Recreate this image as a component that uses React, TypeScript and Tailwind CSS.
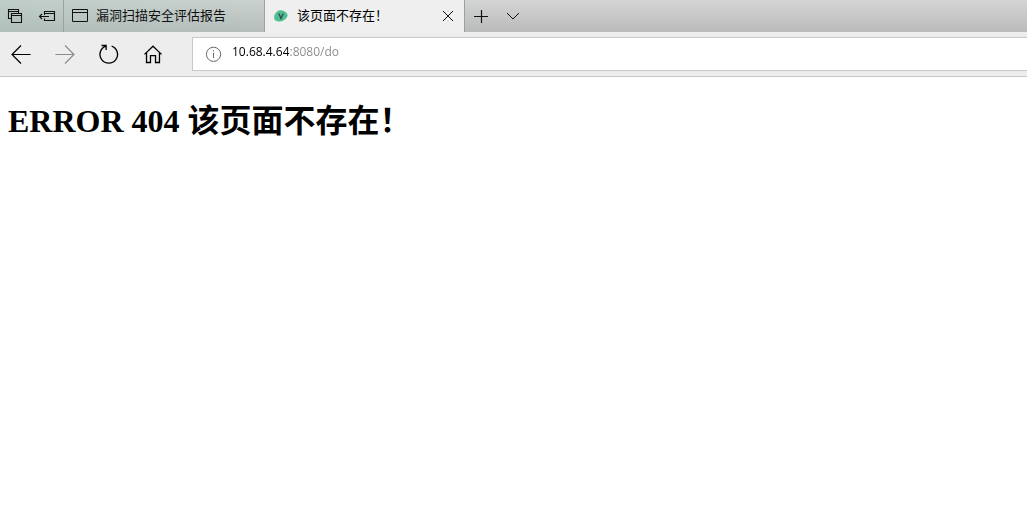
import { useState } from 'react'
import type { ReactNode } from 'react'

interface IconProps {
  className?: string
  children: ReactNode
}

function Icon({ className = 'size-5', children }: IconProps) {
  return (
    <svg viewBox="0 0 20 20" className={className} fill="none" stroke="currentColor" strokeWidth="1" aria-hidden="true">
      {children}
    </svg>
  )
}

function TabStrip() {
  return (
    <header className="flex h-8 bg-linear-to-b from-[#d5d5d5] to-[#bababa] text-[#111]">
      <div className="flex min-w-0 flex-1 bg-linear-to-r from-[#a5c5b9]/45 to-transparent to-50%">
        <div className="flex w-[63px] items-center gap-3 pl-[5px]">
          <button aria-label="Tabs you've set aside">
            <Icon>
              <path d="M6 12.5H3.5V3.5H13.5V7M3 5.5H14M6.5 7.5H16.5V16.5H6.5ZM6 9.5H17" strokeWidth="1.1" />
            </Icon>
          </button>
          <button aria-label="Set these tabs aside">
            <Icon>
              <path d="M7.5 9V5.5H17.5V14.5H7.5V12.5M7 7.5H18M2.5 10.5H12M5 8L2.5 10.5L5 13" strokeWidth="1.1" />
            </Icon>
          </button>
        </div>

        <div className="flex w-[202px] items-center border-x border-[#9aa19f]">
          <button className="flex w-full items-center gap-2 pl-2 text-left">
            <svg viewBox="0 0 16 16" className="size-4" fill="none" stroke="currentColor" aria-hidden="true">
              <path d="M.5 1.5H15.5V13.5H.5ZM0 4.5H16" />
            </svg>
            <span className="mb-0.5 text-[13px] leading-5">漏洞扫描安全评估报告</span>
          </button>
        </div>

        <div className="flex w-[200px] items-center border-r border-[#9aa19f] bg-[#eeefee]">
          <button className="flex flex-1 items-center gap-2 pl-2 text-left">
            <svg viewBox="0 0 16 16" className="size-4" aria-hidden="true">
              <path d="M2 6C3.5 3.5 6 1.8 8.5 2.3C11.5 3 15 5.2 14.6 7.6C13.8 10.5 10.5 13.8 6.5 13.6C3.5 13.4 1 12.5 1.2 9.8C1.2 8.4 1.3 7 2 6Z" fill="#4fc08d" />
              <path d="M5.8 5.5L8 10.5L10.2 5.5" fill="none" stroke="#35495e" strokeWidth="1.4" />
            </svg>
            <span className="mb-0.5 text-[13px] leading-5 text-black">该页面不存在！</span>
          </button>
          <button aria-label="Close tab" className="mr-1.5">
            <Icon>
              <path d="M5 5L15 15M15 5L5 15" />
            </Icon>
          </button>
        </div>

        <button aria-label="New tab" className="flex w-8 items-center justify-center">
          <Icon>
            <path d="M3 10.5H17M10.5 4V17" strokeWidth="1.2" />
          </Icon>
        </button>
        <button aria-label="Show tab previews" className="flex w-8 items-center justify-center">
          <Icon>
            <path d="M4 7L10 13L16 7" />
          </Icon>
        </button>
      </div>
    </header>
  )
}

function Toolbar() {
  const [url, setUrl] = useState('10.68.4.64:8080/do')

  return (
    <nav className="flex h-[45px] items-center border-b border-[#c8c8c8] bg-[#ededed] text-black">
      <div className="flex w-48 shrink-0 items-center pl-[9px]">
        <button aria-label="Back" className="w-11">
          <Icon className="size-6">
            <path d="M2.5 10.4H18M10 2.9L2.5 10.4L10 17.9" />
          </Icon>
        </button>
        <button aria-label="Forward" className="w-11 text-[#8c8c8c]" disabled>
          <Icon className="size-6">
            <path d="M2 10.4H17.5M10 2.9L17.5 10.4L10 17.9" />
          </Icon>
        </button>
        <button aria-label="Refresh" className="w-11">
          <Icon className="size-6">
            <path d="M12.2 3.4A7.3 7.3 0 1 1 7.4 3.4M3.8 2.9H7.6V6.7" strokeWidth="1.1" />
          </Icon>
        </button>
        <button aria-label="Home" className="w-11">
          <Icon className="size-6">
            <path d="M2.9 10.3L10 3.5L17.1 10.3M4.6 9V17.1H7.9V11.3H12.1V17.1H15.4V9" strokeWidth="1.1" />
          </Icon>
        </button>
      </div>

      <div className="flex h-[34px] min-w-0 flex-1 items-center border border-r-0 border-[#c8c8c8] bg-white pl-3">
        <button aria-label="Site information" className="text-[#666]">
          <svg viewBox="0 0 18 18" className="size-[18px]" fill="none" stroke="currentColor" aria-hidden="true">
            <circle cx="8.5" cy="9.3" r="7.1" />
            <path d="M8.5 7.8V13M8.5 5.3V6.5" />
          </svg>
        </button>
        {/* host is drawn black, port and path grey */}
        <input
          type="text"
          aria-label="Address"
          value={url}
          onChange={(e) => setUrl(e.target.value)}
          className="mb-1 ml-[9px] min-w-0 flex-1 bg-linear-to-r from-black from-[57px] to-[#888] to-[57px] bg-clip-text font-['Open_Sans','Noto_Sans_CJK_SC',sans-serif] text-[12px] leading-5 text-transparent caret-black outline-none"
        />
      </div>
    </nav>
  )
}

export default function App() {
  return (
    <div className="min-h-screen bg-white font-['Noto_Sans_CJK_SC',sans-serif]">
      <TabStrip />
      <Toolbar />
      <main className="px-2 py-6">
        <h1 className="font-['Liberation_Serif','Noto_Sans_CJK_SC',serif] text-[32px] leading-10 font-bold text-black">
          ERROR 404 该页面不存在！
        </h1>
      </main>
    </div>
  )
}
